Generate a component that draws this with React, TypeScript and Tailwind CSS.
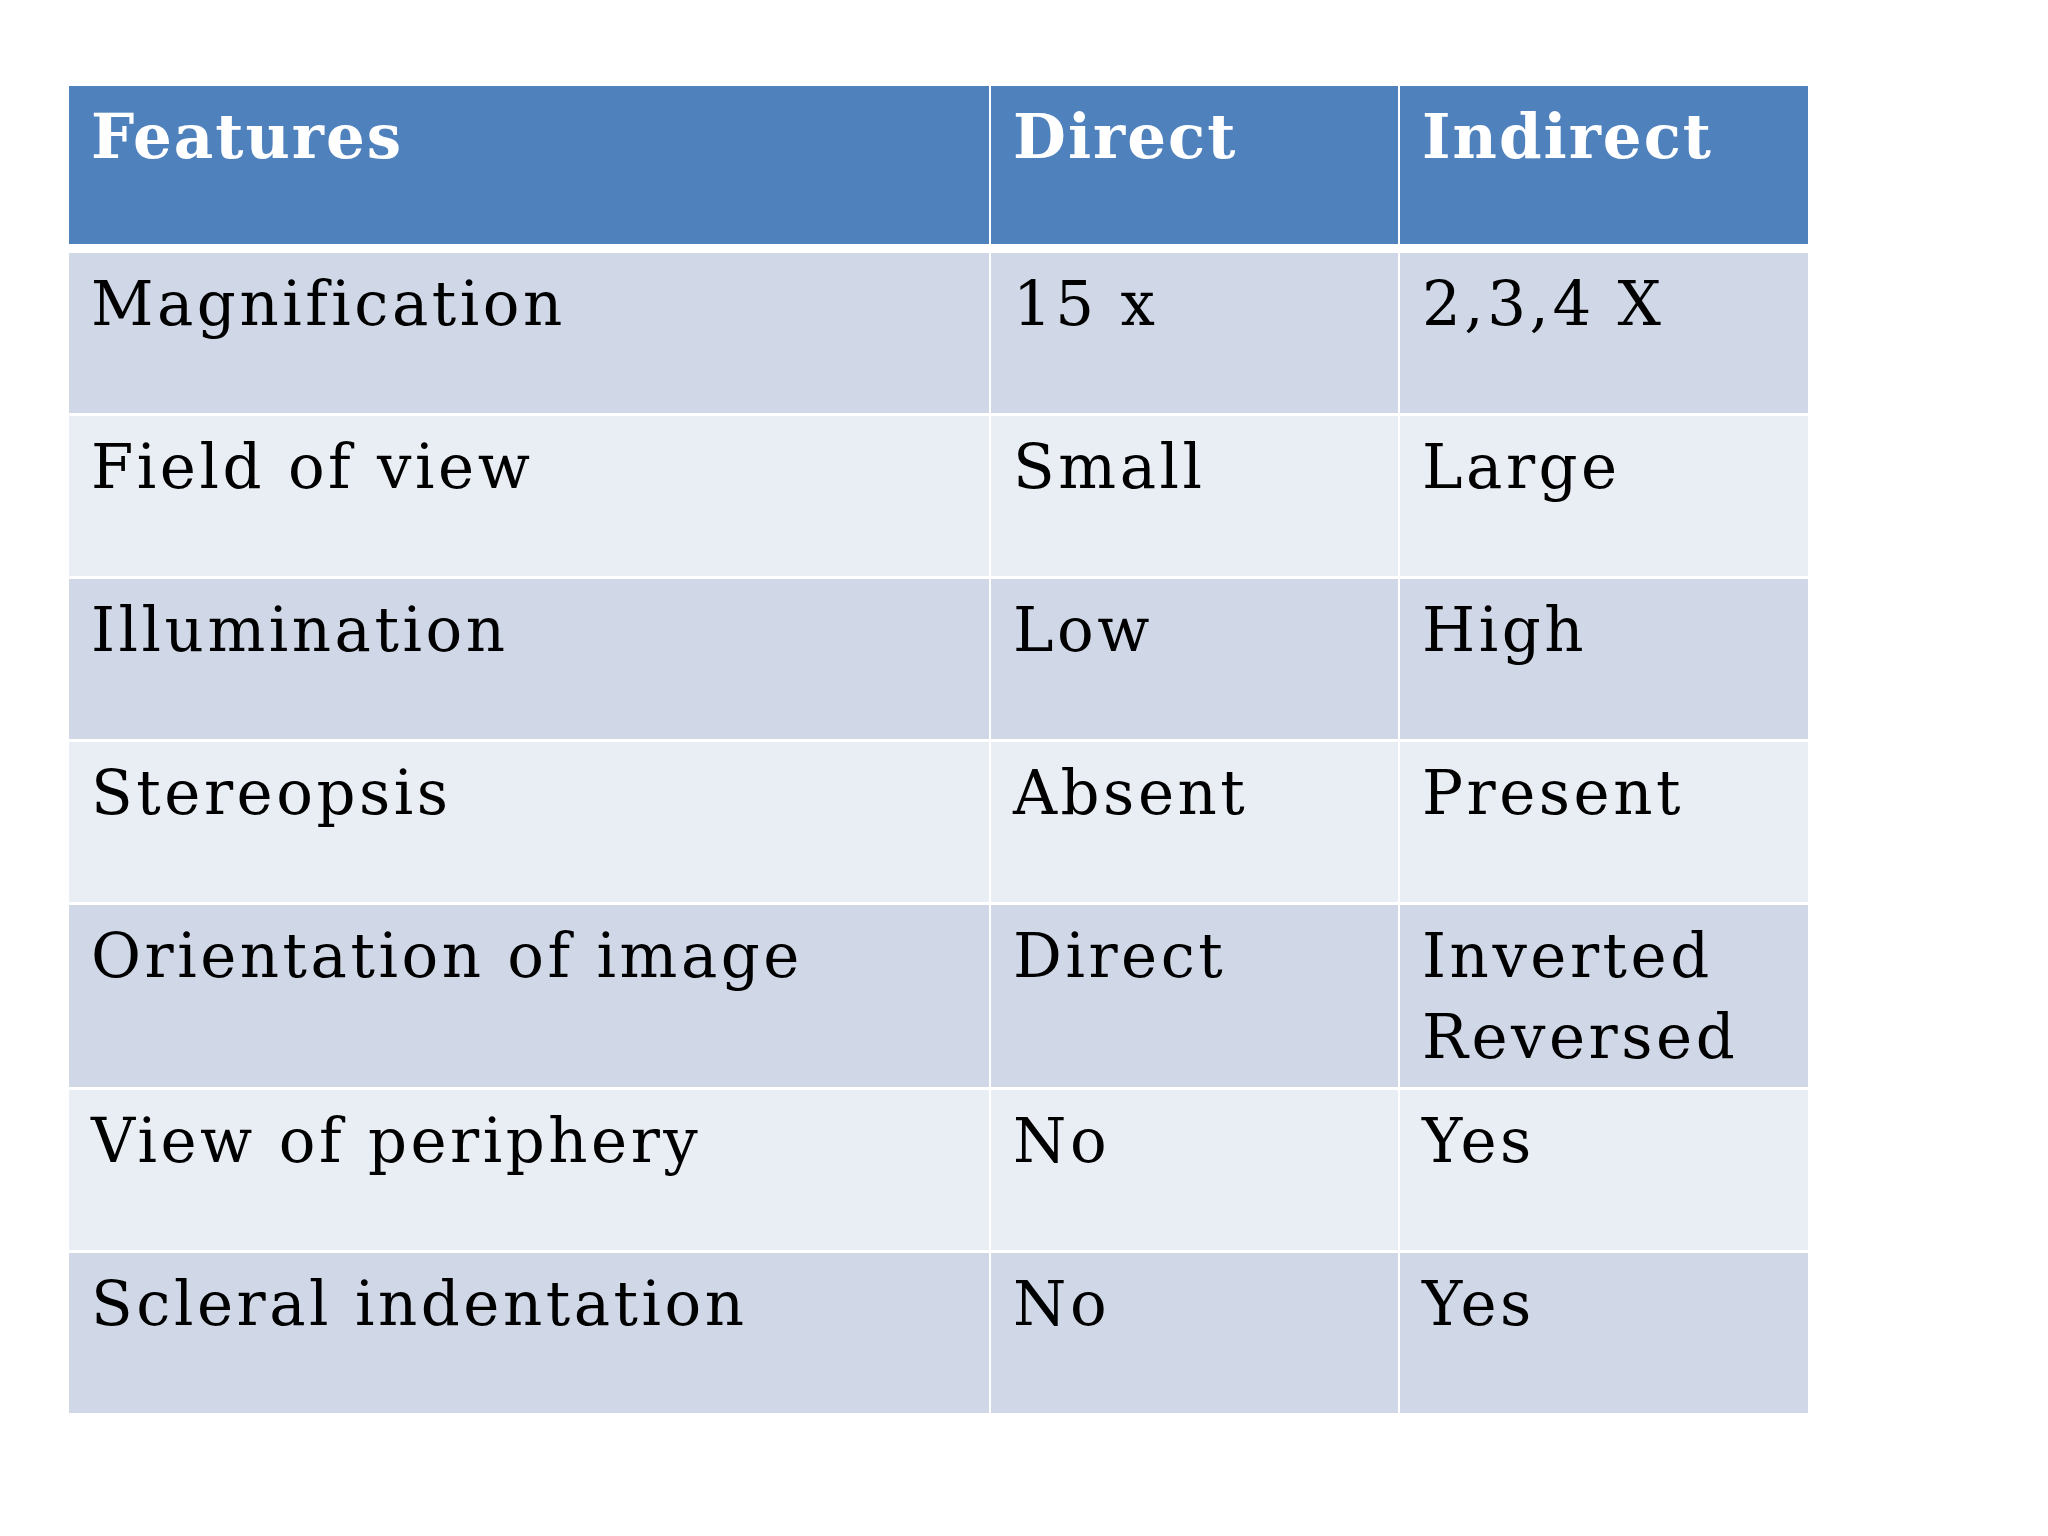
const rows: { feature: string; direct: string; indirect: string[]; tall?: boolean }[] = [
  { feature: "Magnification", direct: "15 x", indirect: ["2,3,4 X"] },
  { feature: "Field of view", direct: "Small", indirect: ["Large"] },
  { feature: "Illumination", direct: "Low", indirect: ["High"] },
  { feature: "Stereopsis", direct: "Absent", indirect: ["Present"] },
  { feature: "Orientation of image", direct: "Direct", indirect: ["Inverted", "Reversed"], tall: true },
  { feature: "View of periphery", direct: "No", indirect: ["Yes"] },
  { feature: "Scleral indentation", direct: "No", indirect: ["Yes"] },
];

const cell = "pl-[22px] pt-[10px] leading-[81px]";

export default function App() {
  return (
    <div
      className="w-[2048px] h-[1536px] bg-white pt-[86px] pl-[69px] text-[61px] tracking-[3.5px] text-black"
      style={{ fontFamily: '"DejaVu Serif", "Liberation Serif", serif' }}
    >
      <div className="flex w-[1739px] flex-col">
        <div className="grid h-[158px] grid-cols-[920px_407px_408px] gap-x-[2px] font-bold tracking-[2px] text-white">
          <div className={`${cell} bg-[#4f81bd]`}>Features</div>
          <div className={`${cell} bg-[#4f81bd]`}>Direct</div>
          <div className={`${cell} bg-[#4f81bd]`}>Indirect</div>
        </div>
        <div className="mt-[9px] flex flex-col gap-y-[3px]">
          {rows.map((r, i) => {
            const bg = i % 2 === 0 ? "bg-[#d0d8e8]" : "bg-[#e9edf4]";
            return (
              <div
                key={r.feature}
                className={`grid grid-cols-[920px_407px_408px] gap-x-[2px] ${r.tall ? "h-[182px]" : "h-[160px]"}`}
              >
                <div className={`${cell} ${bg}`}>{r.feature}</div>
                <div className={`${cell} ${bg}`}>{r.direct}</div>
                <div className={`${cell} ${bg}`}>
                  {r.indirect.map((t) => (
                    <div key={t}>{t}</div>
                  ))}
                </div>
              </div>
            );
          })}
        </div>
      </div>
    </div>
  );
}
